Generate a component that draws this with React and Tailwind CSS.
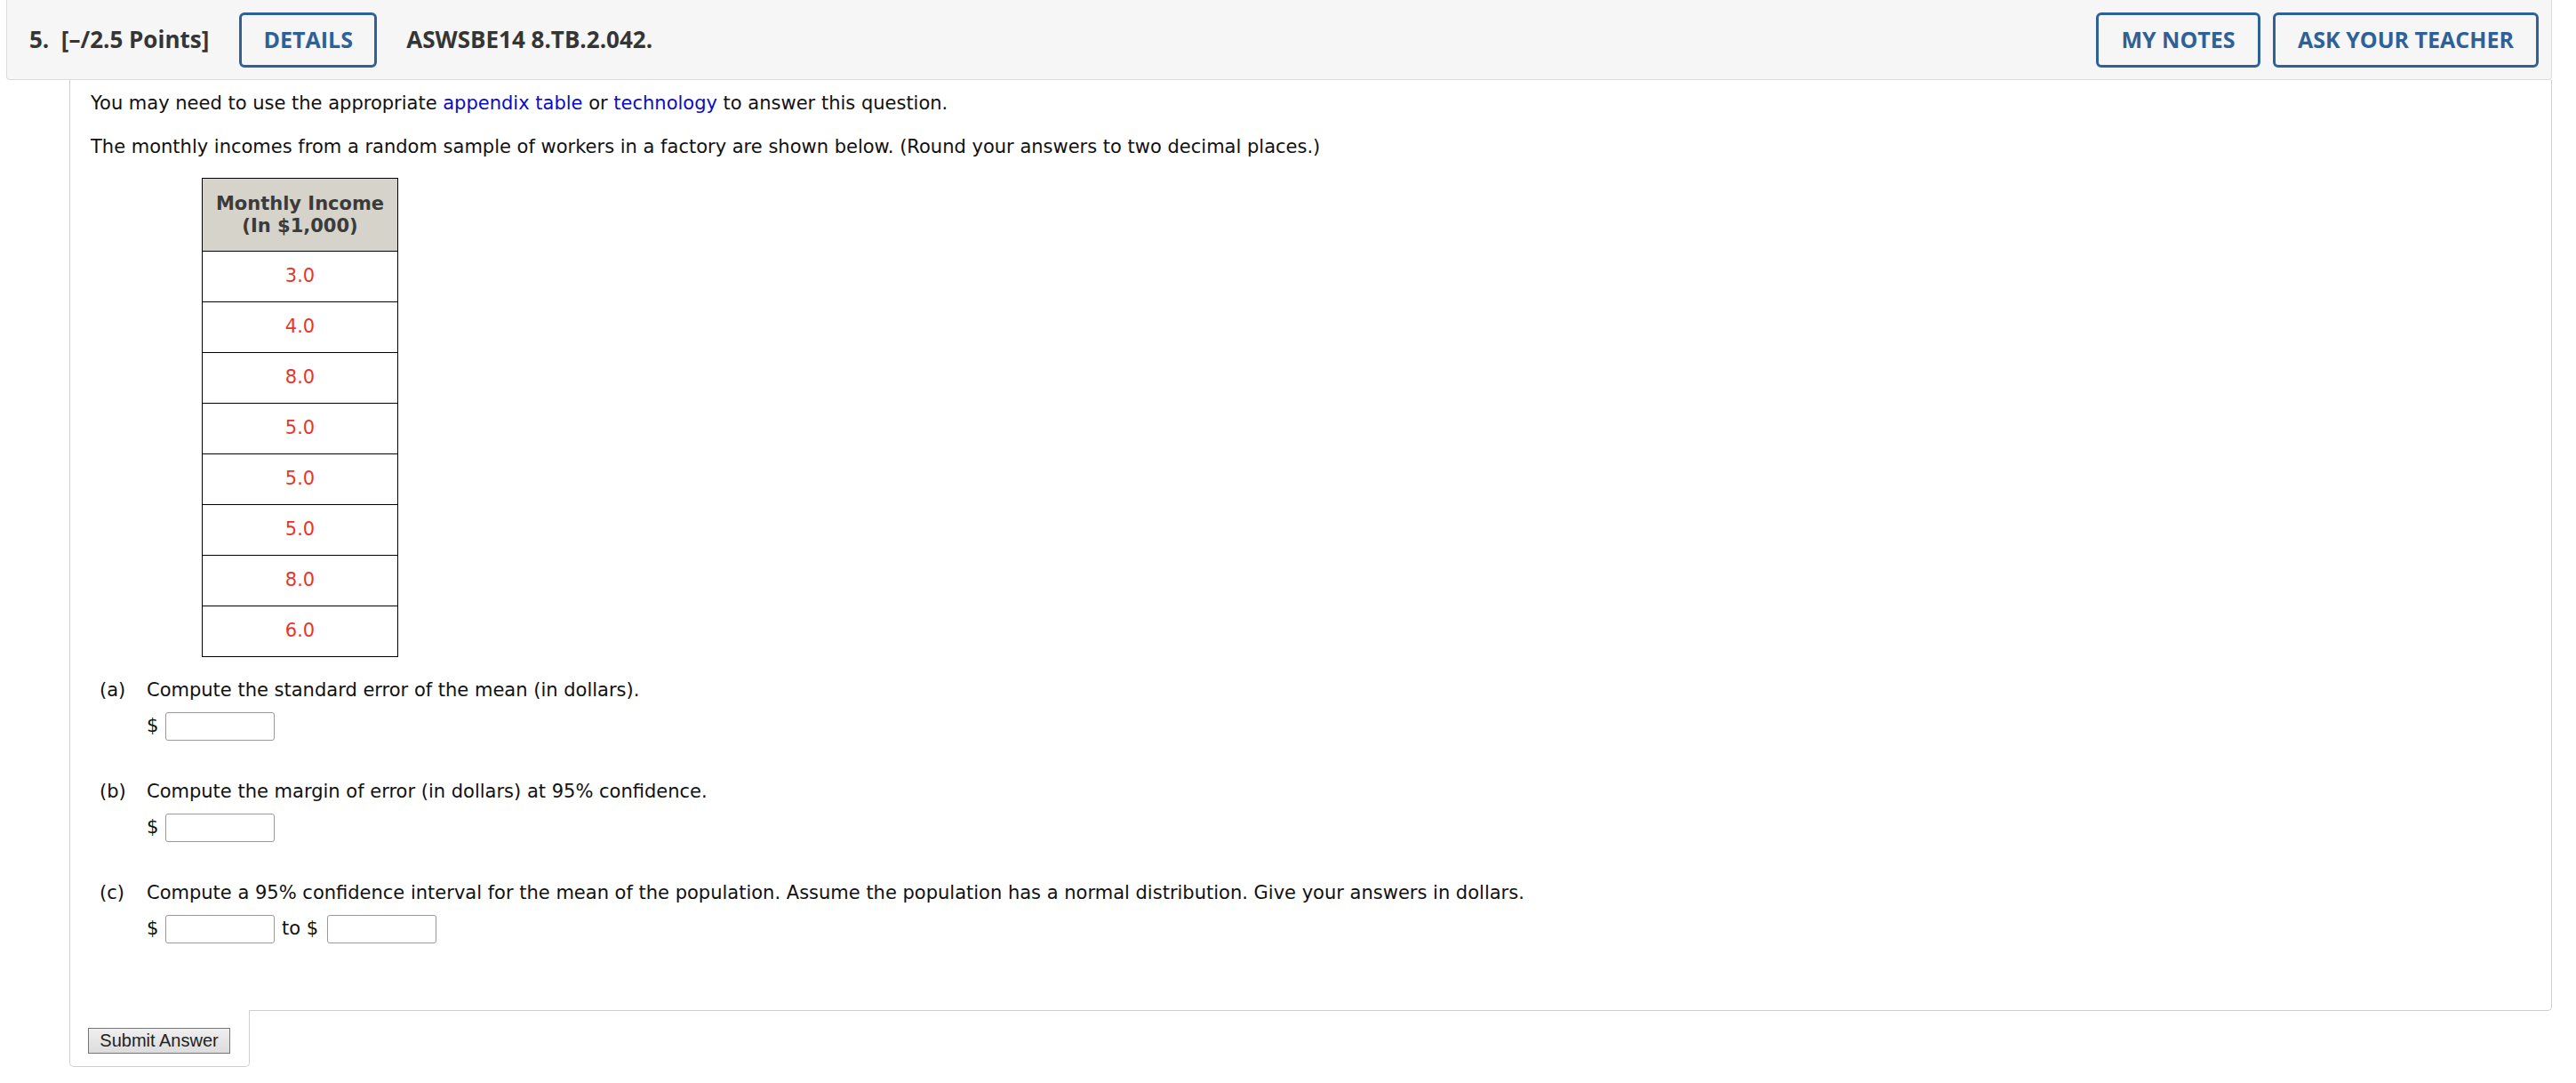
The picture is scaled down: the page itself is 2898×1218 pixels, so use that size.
const incomes = ["3.0", "4.0", "8.0", "5.0", "5.0", "5.0", "8.0", "6.0"]

const AnswerBox = () => (
  <input
    type="text"
    className="w-[123px] h-[32px] border border-[#9a9a9a] rounded-[3px] bg-white outline-none"
  />
)

const HeaderButton = ({ children, width }) => (
  <button
    type="button"
    className={`${width} h-[62px] flex items-center justify-center border-[3px] border-[#2d6197] rounded-[6px] text-[25px] font-bold text-[#2d6197] bg-transparent`}
  >
    {children}
  </button>
)

const Part = ({ label, text, children, className }) => (
  <div className={className}>
    <div className="flex leading-[27px]">
      <span className="w-[53px] shrink-0">{label}</span>
      <span>{text}</span>
    </div>
    <div className="mt-[11px] ml-[53px] flex items-center h-[32px]">{children}</div>
  </div>
)

export default function App() {
  return (
    <div className="w-full min-h-screen bg-white pl-[7px] pr-[27px]">
      {/* Cabecera de la pregunta */}
      <div
        className="h-[90px] flex items-center bg-[#f6f6f6] border-x border-b border-[#dcdcdc] rounded-b-[4px] pl-[25px] pr-[14px] text-[#353535]"
        style={{ fontFamily: '"Open Sans", "Liberation Sans", sans-serif' }}
      >
        <span className="text-[26px] font-bold whitespace-pre">5.  [–/2.5 Points]</span>
        <div className="ml-[34px]">
          <HeaderButton width="w-[155px]">DETAILS</HeaderButton>
        </div>
        <span className="ml-[33px] text-[26px] font-bold">ASWSBE14 8.TB.2.042.</span>
        <div className="ml-auto flex gap-[14px]">
          <HeaderButton width="w-[185px]">MY NOTES</HeaderButton>
          <HeaderButton width="w-[299px]">ASK YOUR TEACHER</HeaderButton>
        </div>
      </div>

      {/* Cuerpo */}
      <div
        className="ml-[71px] text-[21px] text-[#111]"
        style={{ fontFamily: '"DejaVu Sans", Verdana, sans-serif' }}
      >
        <div className="border-x border-b border-[#cfcfcf] rounded-br-[5px] pl-[23px] pt-[13px] pb-[75px]">
          <p className="leading-[27px]">
            You may need to use the appropriate <span className="text-[#0b0bc8]">appendix table</span> or{" "}
            <span className="text-[#0b0bc8]">technology</span> to answer this question.
          </p>
          <p className="leading-[27px] mt-[22px]">
            The monthly incomes from a random sample of workers in a factory are shown below. (Round your
            answers to two decimal places.)
          </p>

          {/* Tabla */}
          <div className="mt-[21px] ml-[125px] w-[221px] border border-black">
            <div className="h-[81px] bg-[#d6d3ca] flex flex-col items-center justify-center font-bold text-[#3b3b3b] leading-[25px] text-center">
              <span>Monthly Income</span>
              <span>(In $1,000)</span>
            </div>
            {incomes.map((v, i) => (
              <div
                key={i}
                className="h-[57px] border-t border-black flex items-center justify-center text-[#e8352a]"
              >
                {v}
              </div>
            ))}
          </div>

          <div className="ml-[10px]">
            <Part className="mt-[24px]" label="(a)" text="Compute the standard error of the mean (in dollars).">
              <span className="w-[21px]">$</span>
              <AnswerBox />
            </Part>
            <Part className="mt-[44px]" label="(b)" text="Compute the margin of error (in dollars) at 95% confidence.">
              <span className="w-[21px]">$</span>
              <AnswerBox />
            </Part>
            <Part
              className="mt-[44px]"
              label="(c)"
              text="Compute a 95% confidence interval for the mean of the population. Assume the population has a normal distribution. Give your answers in dollars."
            >
              <span className="w-[21px]">$</span>
              <AnswerBox />
              <span className="ml-[8px] mr-[10px]">to $</span>
              <AnswerBox />
            </Part>
          </div>
        </div>

        {/* Pestaña de envío */}
        <div className="-mt-px w-[203px] h-[64px] bg-white border-x border-b border-[#cfcfcf] rounded-b-[5px] pl-[20px] pt-[19px]">
          <button
            type="button"
            className="w-[160px] h-[29px] border border-[#767676] bg-gradient-to-b from-[#efefef] to-[#dcdcdc] text-[20px] text-[#222] leading-none"
            style={{ fontFamily: '"Liberation Sans", Arial, sans-serif' }}
          >
            Submit Answer
          </button>
        </div>
      </div>
    </div>
  )
}
